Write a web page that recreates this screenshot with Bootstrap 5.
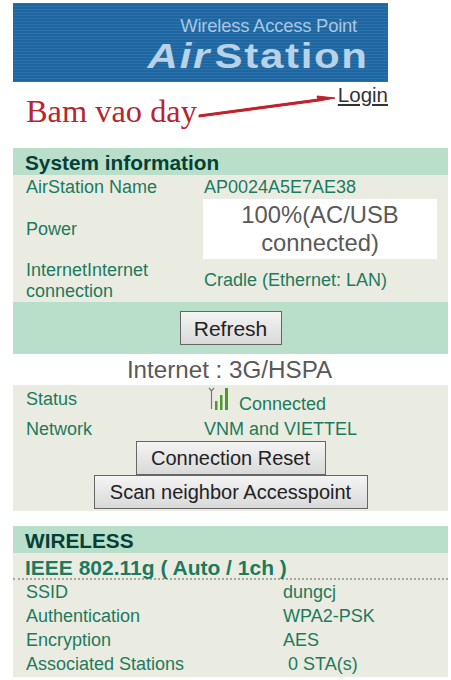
<!DOCTYPE html>
<html lang="en">
<head>
<meta charset="utf-8">
<title>AirStation</title>
<link href="https://cdn.jsdelivr.net/npm/bootstrap@5.3.0/dist/css/bootstrap.min.css" rel="stylesheet">
<style>
html,body{height:680px;overflow:hidden}
body{background:#fff;font-family:"Liberation Sans",Arial,sans-serif;font-size:18px;color:#1c7a5e;line-height:21px;position:relative;padding:3px 3px 0 13px}
.banner{width:375px;height:79px;background:repeating-linear-gradient(180deg,#2a74ae 0,#2a74ae 1.5px,#1f659f 1.5px,#1f659f 3px);align-items:flex-end;padding:0 19px 12px 0}
.ban-sub{color:#a9c7e2;font-size:18.4px;line-height:18px;margin-right:12px;letter-spacing:-.2px;margin-bottom:7px}
.ban-main{color:#b9d2e8;font-size:35px;font-weight:700;line-height:28px;letter-spacing:1.4px;transform:scaleX(1.2);transform-origin:right}
.ban-main i{margin-right:3px}
.login-row{height:66px;width:375px}
.login{color:#333;font-size:20.500px;line-height:26px;text-decoration:underline}
.bam{position:absolute;left:26px;top:90px;font-family:"Liberation Serif",serif;color:#b7252f;font-size:32.4px;line-height:42px}
.arrow{position:absolute;left:197px;top:90px}
.head{background:#b9dfcb;height:27px;color:#063f36;font-size:20.8px;font-weight:700;line-height:30px;padding-left:12px}
.panel{background:#ebece1}
.info{display:grid;grid-template-columns:178px 233px;padding-left:13px;align-items:center}
.row-one{height:24px;line-height:24px}
.row-wrap{height:43px;display:flex;align-items:center}
.power{background:#fff;color:#595959;font-size:23.800px;line-height:28px;text-align:center;height:60px;padding-top:2px;margin-left:-1px}
.strip{background:#b9dfcb;height:52px}
.fake-btn{background:linear-gradient(#f4f4f4,#d9d9d9);border:1px solid #666;border-radius:0;color:#222;font-size:20px;line-height:31px;padding:0;height:34px}
.refresh{width:102px;font-size:21px}
.net-title{height:31px;color:#595959;font-size:24.2px;line-height:31px;text-align:center;padding-right:2px}
.sec2{height:126px;padding-top:1px}
.stat{height:31px;line-height:26px}
.stat-val{height:31px;line-height:36px;white-space:nowrap}
.reset{width:190px}
.scan{width:274px}
.gap-head{margin-top:15px}
.ieee{font-size:21px;font-weight:700;height:27px;line-height:29px;padding-left:12px;border-bottom:2px dotted #a9a99b}
.wl{display:grid;grid-template-columns:257px 1fr;padding-left:13px;grid-auto-rows:24px;line-height:24px;height:97px}
.sig{margin-right:9px;margin-left:4px;vertical-align:-1px}
</style>
</head>
<body>
<div class="banner d-flex justify-content-end">
  <div class="text-end">
    <div class="ban-sub">Wireless Access Point</div>
    <div class="ban-main"><i>Air</i>Station</div>
  </div>
</div>
<div class="login-row text-end"><a class="login" href="#">Login</a></div>
<div class="bam">Bam vao day</div>
<svg class="arrow" width="140" height="32" viewBox="0 0 140 32"><path d="M2 27 L122 11 L138 8 L120 6 L121 9 L2 25Z" fill="#c0202c" stroke="#c0202c"/></svg>

<section>
  <div class="head">System information</div>
  <div class="panel info">
    <div class="row-one">AirStation Name</div><div class="row-one">AP0024A5E7AE38</div>
    <div>Power</div><div class="power">100%(AC/USB connected)</div>
    <div class="row-wrap">InternetInternet connection</div><div class="row-wrap">Cradle (Ethernet: LAN)</div>
  </div>
  <div class="strip d-flex justify-content-center align-items-center"><button type="button" class="btn fake-btn refresh">Refresh</button></div>
</section>

<div class="net-title">Internet : 3G/HSPA</div>
<section class="panel sec2">
  <div class="info">
    <div class="stat">Status</div>
    <div class="stat-val"><svg class="sig" width="22" height="24" viewBox="0 0 22 24"><path d="M1 1l2.500 3 2.500-3M3.500 4v18" stroke="#777" stroke-width="1.2" fill="none"/><path d="M7 14h2.500v9H7zM12 8h2.500v15H12zM17 1h3v22h-3z" fill="#4f9a2e"/></svg>Connected</div>
    <div class="row-one">Network</div><div class="row-one">VNM and VIETTEL</div>
  </div>
  <div class="d-flex flex-column align-items-center">
    <button type="button" class="btn fake-btn reset">Connection Reset</button>
    <button type="button" class="btn fake-btn scan">Scan neighbor Accesspoint</button>
  </div>
</section>

<section class="gap-head">
  <div class="head">WIRELESS</div>
  <div class="panel">
    <div class="ieee">IEEE 802.11g ( Auto / 1ch )</div>
    <div class="wl">
      <div>SSID</div><div>dungcj</div>
      <div>Authentication</div><div>WPA2-PSK</div>
      <div>Encryption</div><div>AES</div>
      <div>Associated Stations</div><div>&nbsp;0 STA(s)</div>
    </div>
  </div>
</section>
</body>
</html>
